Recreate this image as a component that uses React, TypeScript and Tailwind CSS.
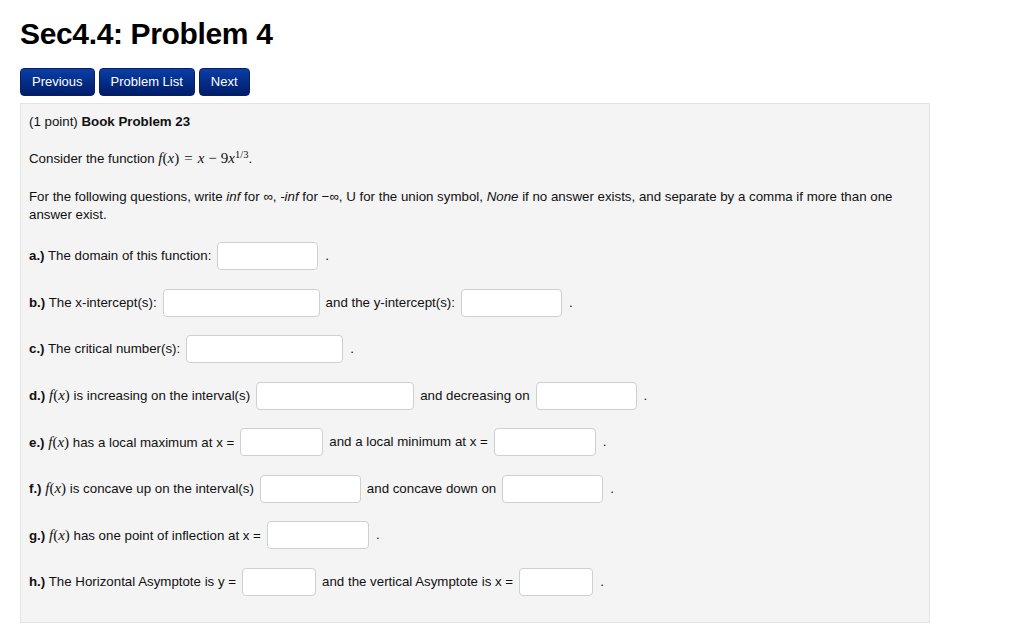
import * as React from "react"

function Fx() {
  return (
    <span className="font-['Liberation_Serif',serif] text-[15px] leading-[18px]">
      <i>f</i>(<i>x</i>)
    </span>
  )
}

function Box({ w }: { w: number }) {
  return (
    <input
      type="text"
      className="h-[28px] rounded-[4px] border border-[#cfcfcf] bg-white px-1 outline-none"
      style={{ width: w }}
    />
  )
}

function Row({ children }: { children: React.ReactNode }) {
  return <div className="flex h-[46.5px] items-center gap-[6px] whitespace-nowrap">{children}</div>
}

function Dot() {
  return <span className="ml-[1px]">.</span>
}

const navBtn =
  "h-[28px] rounded-[4px] border border-[#0b1f5e] bg-gradient-to-b from-[#0b3ea6] to-[#001d69] px-[11px] text-[13px] text-white"

export default function App() {
  return (
    <div className="min-h-[632px] bg-white px-[20px] pt-[16px] font-['Liberation_Sans',Arial,sans-serif] text-[#111]">
      <h1 className="text-[30px] font-bold leading-[36px] tracking-[-0.35px] text-black">Sec4.4: Problem 4</h1>

      <div className="mt-[16px] flex gap-[4px]">
        <button className={navBtn}>Previous</button>
        <button className={navBtn}>Problem List</button>
        <button className={navBtn}>Next</button>
      </div>

      <div className="mt-[7px] w-[910px] border border-[#e3e3e3] bg-[#f4f4f4] px-[8px] pb-[17px] pt-[9px] text-[13.3px] leading-[18px]">
        <p>
          (1 point) <b>Book Problem 23</b>
        </p>

        <p className="mt-[18px] h-[18px]">
          Consider the function <Fx />
          <span className="font-['Liberation_Serif',serif] text-[15px] leading-[18px]">
            <span className="mx-[5px]">=</span>
            <i>x</i>
            <span className="mx-[4px]">−</span>9<i>x</i>
            <sup className="text-[10.5px]">1/3</sup>
          </span>
          .
        </p>

        <p className="mt-[21px]">
          For the following questions, write <i>inf</i> for ∞, <i>-inf</i> for −∞, U for the union symbol,{" "}
          <i>None</i> if no answer exists, and separate by a comma if more than one answer exist.
        </p>

        <div className="mt-[9px]">
          <Row>
            <span>
              <b>a.)</b> The domain of this function:
            </span>
            <Box w={101} />
            <Dot />
          </Row>
          <Row>
            <span>
              <b>b.)</b> The x-intercept(s):
            </span>
            <Box w={157} />
            <span>and the y-intercept(s):</span>
            <Box w={101} />
            <Dot />
          </Row>
          <Row>
            <span>
              <b>c.)</b> The critical number(s):
            </span>
            <Box w={157} />
            <Dot />
          </Row>
          <Row>
            <span>
              <b>d.)</b> <Fx /> is increasing on the interval(s)
            </span>
            <Box w={158} />
            <span>and decreasing on</span>
            <Box w={101} />
            <Dot />
          </Row>
          <Row>
            <span>
              <b>e.)</b> <Fx /> has a local maximum at x =
            </span>
            <Box w={83} />
            <span>and a local minimum at x =</span>
            <Box w={102} />
            <Dot />
          </Row>
          <Row>
            <span>
              <b>f.)</b> <Fx /> is concave up on the interval(s)
            </span>
            <Box w={101} />
            <span>and concave down on</span>
            <Box w={101} />
            <Dot />
          </Row>
          <Row>
            <span>
              <b>g.)</b> <Fx /> has one point of inflection at x =
            </span>
            <Box w={102} />
            <Dot />
          </Row>
          <Row>
            <span>
              <b>h.)</b> The Horizontal Asymptote is y =
            </span>
            <Box w={74} />
            <span>and the vertical Asymptote is x =</span>
            <Box w={74} />
            <Dot />
          </Row>
        </div>
      </div>
    </div>
  )
}
